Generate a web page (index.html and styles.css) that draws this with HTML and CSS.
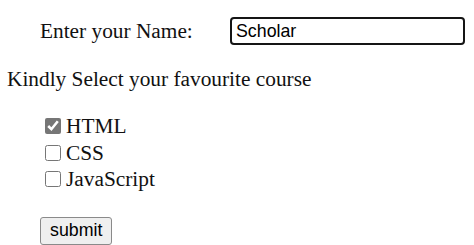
FILE: index.html
```html
<!DOCTYPE html>
<html>
<head>
<meta charset="utf-8">
<link rel="stylesheet" href="styles.css">
</head>
<body>
<form class="form">
  <div class="name-row">
    <label class="name-label" for="name">Enter your Name:</label>
    <input class="name-input" id="name" type="text" value="Scholar">
  </div>
  <p class="prompt">Kindly Select your favourite course</p>
  <div class="courses">
    <label class="course"><input type="checkbox" class="check" checked><span>HTML</span></label>
    <label class="course"><input type="checkbox" class="check"><span>CSS</span></label>
    <label class="course"><input type="checkbox" class="check"><span>JavaScript</span></label>
  </div>
  <div class="actions">
    <button type="button" class="submit">submit</button>
  </div>
</form>
</body>
</html>
```
FILE: styles.css
```css
html, body {
  margin: 0;
  padding: 0;
  background: #ffffff;
}
body {
  font-family: "Liberation Serif", "Times New Roman", serif;
  font-size: 21.33px;
  color: #111111;
  overflow: hidden;
}
.form {
  padding: 17px 0 0 7px;
}
.name-row {
  display: flex;
  align-items: center;
  height: 28px;
}
.name-label {
  flex: 0 0 223px;
  padding-left: 33px;
  box-sizing: border-box;
  line-height: 24px;
}
.name-input {
  box-sizing: border-box;
  flex: 0 0 235px;
  width: 235px;
  height: 28px;
  margin: 0;
  padding: 0 4px;
  border: 2px solid #151515;
  border-radius: 4px;
  font-family: "Liberation Sans", Arial, sans-serif;
  font-size: 17.8px;
  color: #000;
  outline: none;
}
.prompt {
  margin: 23px 0 0 0;
  line-height: 23.6px;
}
.courses {
  margin: 21px 0 0 38px;
  display: flex;
  flex-direction: column;
}
.course {
  display: flex;
  align-items: center;
  height: 26.67px;
  line-height: 24px;
}
.check {
  width: 16px;
  height: 16px;
  margin: 0 5px 0 0;
  accent-color: #767676;
}
.actions {
  margin: 24px 0 0 33px;
}
.submit {
  box-sizing: border-box;
  height: 28px;
  padding: 0 9px;
  border: 1px solid #8a8a8a;
  border-radius: 3px;
  background: #efefef;
  font-family: "Liberation Sans", Arial, sans-serif;
  font-size: 17.8px;
  color: #000;
}
```
